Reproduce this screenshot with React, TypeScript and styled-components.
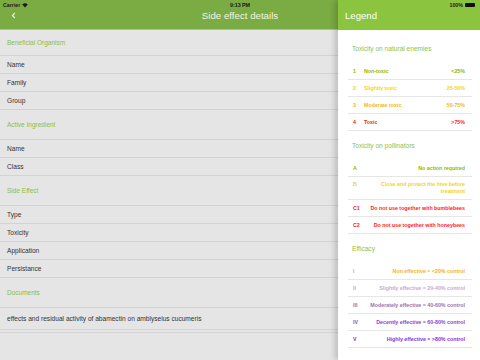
import styled, { createGlobalStyle } from 'styled-components';

const GlobalStyle = createGlobalStyle`
  html, body {
    margin: 0;
    padding: 0;
    width: 480px;
    height: 360px;
    overflow: hidden;
    font-family: "Liberation Sans", Arial, sans-serif;
    background: #e5e5e5;
  }
`;

const Screen = styled.div`
  position: relative;
  width: 480px;
  height: 360px;
  overflow: hidden;
  background: #e5e5e5;
`;

const StatusBar = styled.div`
  position: absolute;
  top: 0;
  left: 0;
  right: 0;
  height: 10px;
  padding: 0 3px;
  display: flex;
  align-items: center;
  justify-content: space-between;
  font-size: 5.3px;
  font-weight: bold;
  color: #1a1a1a;
  z-index: 5;
`;

const StatusSide = styled.div<{ $end?: boolean }>`
  width: 60px;
  display: flex;
  align-items: center;
  gap: 2px;
  justify-content: ${({ $end }) => ($end ? 'flex-end' : 'flex-start')};
`;

const Battery = styled.span`
  display: inline-block;
  width: 10px;
  height: 4px;
  background: #111;
  border-radius: 1px;
  margin-right: 2px;
`;

const NavBar = styled.div`
  height: 30px;
  background: #7bab43;
  border-bottom: 1px solid #a3c97a;
  display: grid;
  grid-template-columns: 1fr auto 1fr;
  align-items: center;
  padding-top: 1px;
  box-sizing: border-box;
  color: #eef5e4;
`;

const Back = styled.div`
  padding-left: 11px;
  display: flex;
  align-items: center;
`;

const Title = styled.div`
  font-size: 9.7px;
`;

const Content = styled.div`
  width: 338px;
`;

const Group = styled.div<{ $footer?: boolean }>`
  padding-bottom: ${({ $footer }) => ($footer ? '2px' : '0')};
  border-bottom: ${({ $footer }) => ($footer ? '1px solid #d3d3d3' : 'none')};
`;

const SectionHeader = styled.div<{ $first?: boolean }>`
  height: ${({ $first }) => ($first ? '26px' : '30px')};
  padding: 0 7px;
  box-sizing: border-box;
  display: flex;
  align-items: center;
  font-size: 6.5px;
  color: #8bbd4a;
  border-bottom: 1px solid #d3d3d3;
`;

const Row = styled.div<{ $tall?: boolean }>`
  height: ${({ $tall }) => ($tall ? '22px' : '18px')};
  padding: 0 7px;
  display: flex;
  align-items: center;
  font-size: 6.6px;
  color: #333;
  border-bottom: 1px solid #d3d3d3;
  box-sizing: border-box;
`;

const Drawer = styled.div`
  position: absolute;
  top: 0;
  left: 338px;
  width: 142px;
  height: 360px;
  background: #fff;
  box-shadow: -3px 0 6px rgba(0, 0, 0, 0.18);
  z-index: 3;
`;

const DrawerHeader = styled.div`
  height: 30px;
  background: #8bc43f;
  display: flex;
  align-items: center;
  padding: 1px 0 0 7px;
  box-sizing: border-box;
  font-size: 9.6px;
  color: #fff;
`;

const LegendBody = styled.div`
  padding: 4px 8px 0 10px;
`;

const LegendTitle = styled.div`
  height: 29px;
  padding-left: 4px;
  display: flex;
  align-items: center;
  font-size: 6.6px;
  color: #8bc34a;
`;

const LegendRow = styled.div<{ $color: string; $tall?: boolean }>`
  min-height: 17px;
  padding: ${({ $tall }) => ($tall ? '4px 7px 4px 5px' : '0 7px 0 5px')};
  display: flex;
  align-items: ${({ $tall }) => ($tall ? 'flex-start' : 'center')};
  font-size: 5.3px;
  font-weight: bold;
  color: ${({ $color }) => $color};
  border-bottom: 1px solid #e6e6e6;
  box-sizing: border-box;
  line-height: 7px;
`;

const Code = styled.span`
  width: 11px;
  flex-shrink: 0;
`;

const Label = styled.span<{ $right?: boolean }>`
  flex: 1;
  text-align: ${({ $right }) => ($right ? 'right' : 'left')};
`;

const Value = styled.span`
  text-align: right;
`;

const ChevronLeft = () => (
  <svg width="5" height="7" viewBox="0 0 5 7">
    <path d="M3.8 1 L1.4 3.5 L3.8 6" fill="none" stroke="#eef5e4" strokeWidth="1.1" />
  </svg>
);

const Wifi = () => (
  <svg width="6" height="5" viewBox="0 0 12 10">
    <path d="M6 9 L0.5 3 A8 8 0 0 1 11.5 3 Z" fill="#1a1a1a" />
  </svg>
);

type Section = { title: string; rows: string[]; tall?: boolean };

const sections: Section[] = [
  { title: 'Beneficial Organism', rows: ['Name', 'Family', 'Group'] },
  { title: 'Active Ingredient', rows: ['Name', 'Class'] },
  { title: 'Side Effect', rows: ['Type', 'Toxicity', 'Application', 'Persistance'] },
  { title: 'Documents', rows: ['effects and residual activity of abamectin on amblyseius cucumeris'], tall: true },
];

const toxicity = [
  { code: '1', label: 'Non-toxic', value: '<25%', color: '#8fb800' },
  { code: '2', label: 'Slightly toxic', value: '25-50%', color: '#f2d31b' },
  { code: '3', label: 'Moderate toxic', value: '50-75%', color: '#f0b90b' },
  { code: '4', label: 'Toxic', value: '>75%', color: '#ff1a1a' },
];

const pollinators = [
  { code: 'A', label: 'No action required', color: '#8fb800' },
  { code: 'B', label: 'Close and protect the hive before treatment', color: '#f2d31b', tall: true },
  { code: 'C1', label: 'Do not use together with bumblebees', color: '#ff1a1a' },
  { code: 'C2', label: 'Do not use together with honeybees', color: '#ff1a1a' },
];

const efficacy = [
  { code: 'I', label: 'Non effective = <20% control', color: '#f6b21d' },
  { code: 'II', label: 'Slightly effective = 20-40% control', color: '#c6a8d4' },
  { code: 'III', label: 'Moderately effective = 40-60% control', color: '#9e70ad' },
  { code: 'IV', label: 'Decently effective = 60-80% control', color: '#8a46d6' },
  { code: 'V', label: 'Highly effective = >80% control', color: '#8b2be0' },
];

export default function App() {
  return (
    <>
      <GlobalStyle />
      <Screen>
        <StatusBar>
          <StatusSide>Carrier <Wifi /></StatusSide>
          <span>9:13 PM</span>
          <StatusSide $end>100% <Battery /></StatusSide>
        </StatusBar>

        <NavBar>
          <Back><ChevronLeft /></Back>
          <Title>Side effect details</Title>
          <div />
        </NavBar>

        <Content>
          {sections.map((s, i) => (
            <Group key={s.title} $footer={s.tall}>
              <SectionHeader $first={i === 0}>{s.title}</SectionHeader>
              {s.rows.map((r) => (
                <Row key={r} $tall={s.tall}>{r}</Row>
              ))}
            </Group>
          ))}
        </Content>

        <Drawer>
          <DrawerHeader>Legend</DrawerHeader>
          <LegendBody>
            <LegendTitle>Toxicity on natural enemies</LegendTitle>
            {toxicity.map((t) => (
              <LegendRow key={t.code} $color={t.color}>
                <Code>{t.code}</Code>
                <Label>{t.label}</Label>
                <Value>{t.value}</Value>
              </LegendRow>
            ))}
            <LegendTitle>Toxicity on pollinators</LegendTitle>
            {pollinators.map((p) => (
              <LegendRow key={p.code} $color={p.color} $tall={p.tall}>
                <Code>{p.code}</Code>
                <Label $right>{p.label}</Label>
              </LegendRow>
            ))}
            <LegendTitle>Efficacy</LegendTitle>
            {efficacy.map((e) => (
              <LegendRow key={e.code} $color={e.color}>
                <Code>{e.code}</Code>
                <Label $right>{e.label}</Label>
              </LegendRow>
            ))}
          </LegendBody>
        </Drawer>
      </Screen>
    </>
  );
}
